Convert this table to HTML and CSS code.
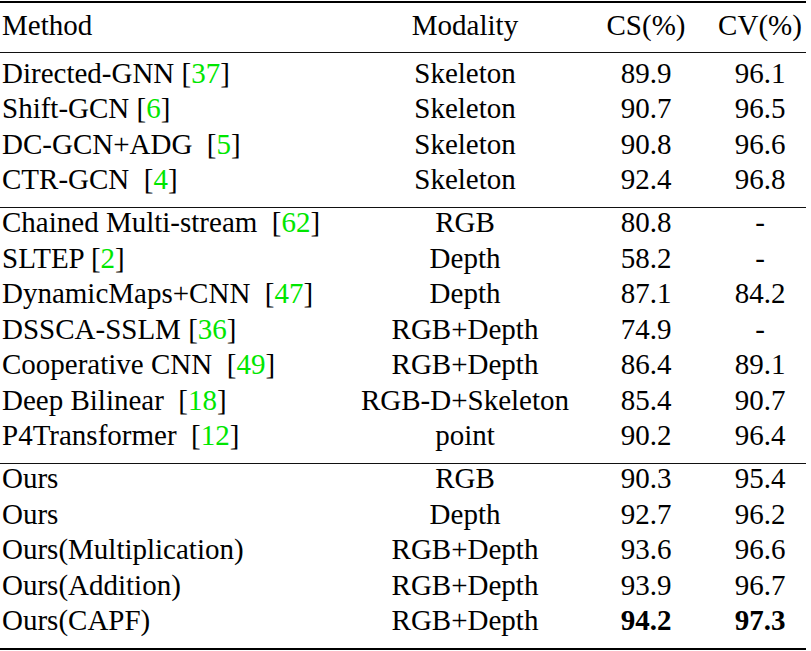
FILE: index.html
```html
<!DOCTYPE html>
<html>
<head>
<meta charset="utf-8">
<link rel="stylesheet" href="styles.css">
</head>
<body>
<div class="table">
  <div class="rule thick top"></div>
  <div class="group head">
    <div class="row"><span class="c1">Method</span><span class="c2">Modality</span><span class="c3">CS(%)</span><span class="c4">CV(%)</span></div>
  </div>
  <div class="rule"></div>
  <div class="group g1">
    <div class="row"><span class="c1">Directed-GNN [<span class="cite">37</span>]</span><span class="c2">Skeleton</span><span class="c3">89.9</span><span class="c4">96.1</span></div>
    <div class="row"><span class="c1">Shift-GCN [<span class="cite">6</span>]</span><span class="c2">Skeleton</span><span class="c3">90.7</span><span class="c4">96.5</span></div>
    <div class="row"><span class="c1">DC-GCN+ADG  [<span class="cite">5</span>]</span><span class="c2">Skeleton</span><span class="c3">90.8</span><span class="c4">96.6</span></div>
    <div class="row"><span class="c1">CTR-GCN  [<span class="cite">4</span>]</span><span class="c2">Skeleton</span><span class="c3">92.4</span><span class="c4">96.8</span></div>
  </div>
  <div class="rule"></div>
  <div class="group">
    <div class="row"><span class="c1">Chained Multi-stream  [<span class="cite">62</span>]</span><span class="c2">RGB</span><span class="c3">80.8</span><span class="c4">-</span></div>
    <div class="row"><span class="c1">SLTEP [<span class="cite">2</span>]</span><span class="c2">Depth</span><span class="c3">58.2</span><span class="c4">-</span></div>
    <div class="row"><span class="c1">DynamicMaps+CNN  [<span class="cite">47</span>]</span><span class="c2">Depth</span><span class="c3">87.1</span><span class="c4">84.2</span></div>
    <div class="row"><span class="c1">DSSCA-SSLM [<span class="cite">36</span>]</span><span class="c2">RGB+Depth</span><span class="c3">74.9</span><span class="c4">-</span></div>
    <div class="row"><span class="c1">Cooperative CNN  [<span class="cite">49</span>]</span><span class="c2">RGB+Depth</span><span class="c3">86.4</span><span class="c4">89.1</span></div>
    <div class="row"><span class="c1">Deep Bilinear  [<span class="cite">18</span>]</span><span class="c2">RGB-D+Skeleton</span><span class="c3">85.4</span><span class="c4">90.7</span></div>
    <div class="row"><span class="c1">P4Transformer  [<span class="cite">12</span>]</span><span class="c2">point</span><span class="c3">90.2</span><span class="c4">96.4</span></div>
  </div>
  <div class="rule"></div>
  <div class="group">
    <div class="row"><span class="c1">Ours</span><span class="c2">RGB</span><span class="c3">90.3</span><span class="c4">95.4</span></div>
    <div class="row"><span class="c1">Ours</span><span class="c2">Depth</span><span class="c3">92.7</span><span class="c4">96.2</span></div>
    <div class="row"><span class="c1">Ours(Multiplication)</span><span class="c2">RGB+Depth</span><span class="c3">93.6</span><span class="c4">96.6</span></div>
    <div class="row"><span class="c1">Ours(Addition)</span><span class="c2">RGB+Depth</span><span class="c3">93.9</span><span class="c4">96.7</span></div>
    <div class="row"><span class="c1">Ours(CAPF)</span><span class="c2">RGB+Depth</span><span class="c3 best">94.2</span><span class="c4 best">97.3</span></div>
  </div>
  <div class="rule thick"></div>
</div>
</body>
</html>
```

FILE: styles.css
```css
html, body {
  margin: 0;
  padding: 0;
  background: #fff;
}
.table {
  width: 806px;
  font-family: "Liberation Serif", "DejaVu Serif", serif;
  font-size: 29px;
  color: #000;
}
.rule {
  height: 1px;
  background: #111;
}
.rule.thick {
  height: 2px;
  background: #000;
}
.rule.top {
  margin-top: 1px;
}
.group {
  padding-bottom: 6.5px;
}
.group.head {
  padding-top: 8px;
  padding-bottom: 5.5px;
}
.group.g1 {
  padding-top: 5.7px;
}
.row {
  display: grid;
  grid-template-columns: 352px 226px 136px 92px;
  height: 35.5px;
  line-height: 29px;
  white-space: pre;
}
.c1 {
  padding-left: 2px;
  text-align: left;
}
.c2, .c3, .c4 {
  text-align: center;
}
.cite {
  color: #00e600;
}
.best {
  font-weight: bold;
}
```
